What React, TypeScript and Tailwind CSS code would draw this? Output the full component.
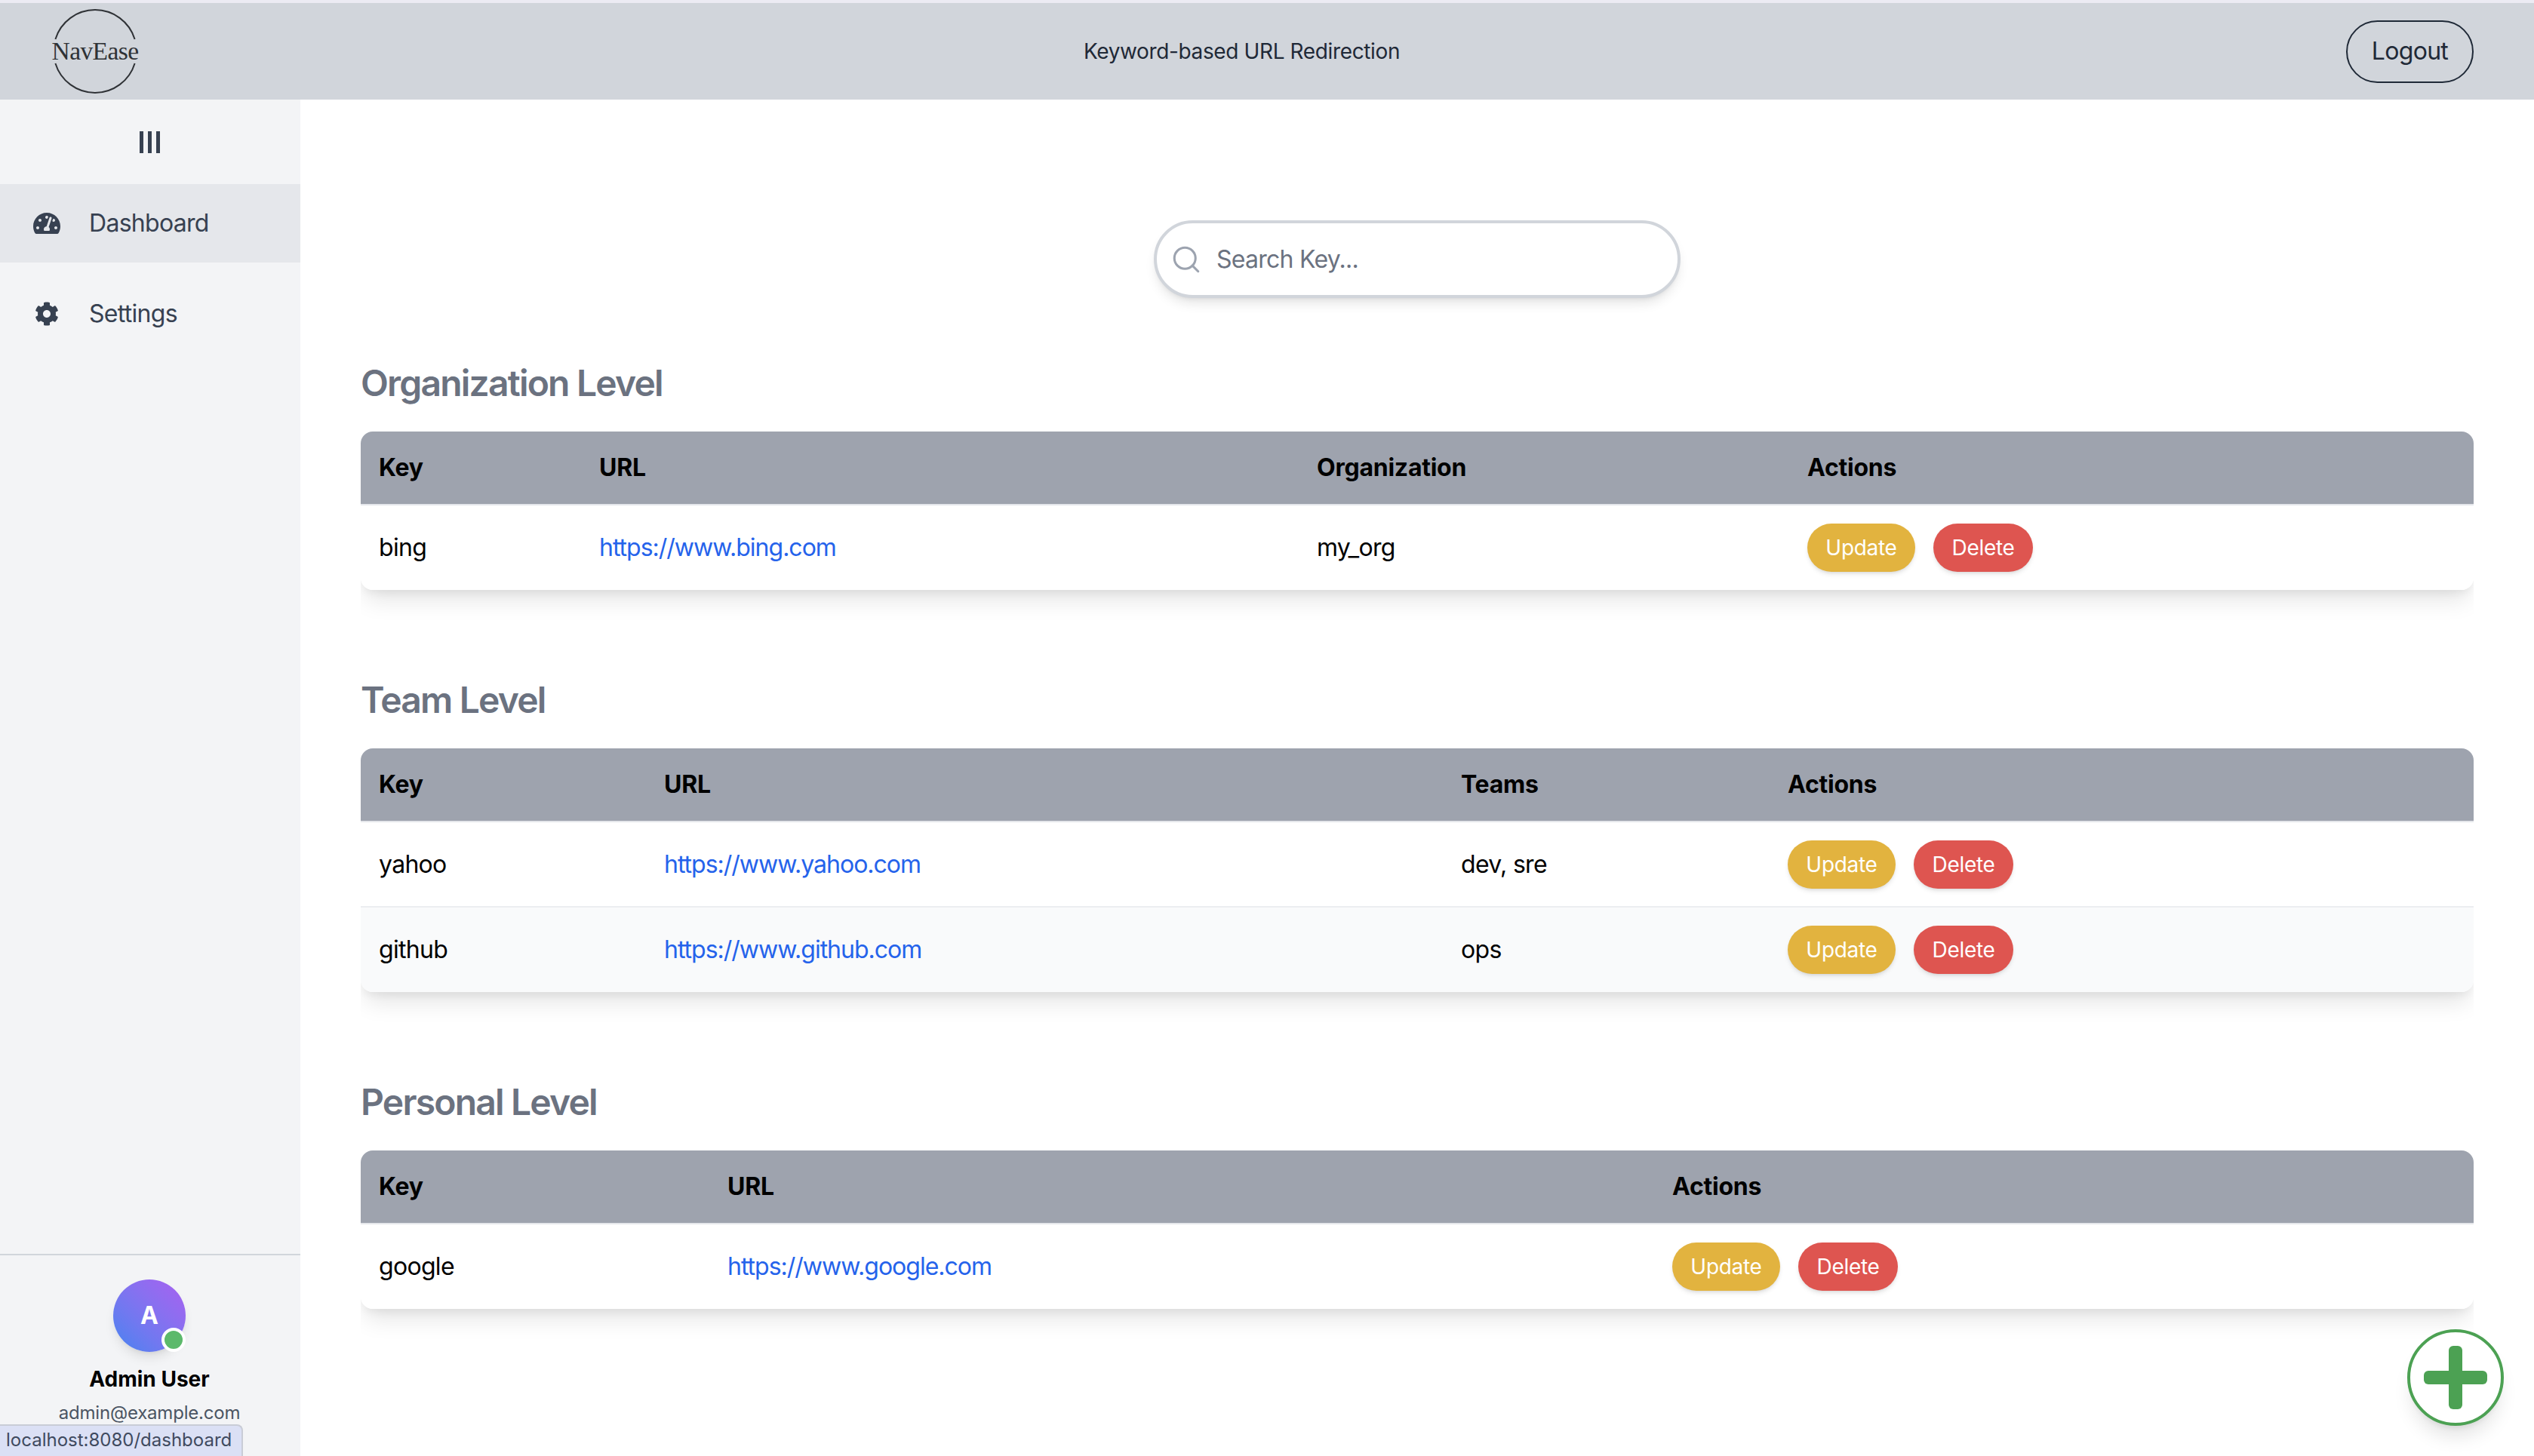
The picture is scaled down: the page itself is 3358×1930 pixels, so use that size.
import { Search } from "lucide-react"
import { FaCog, FaTachometerAlt } from "react-icons/fa"

type Row = { key: string; url: string; extra?: string }

function NavLogo() {
  return (
    <svg width="120" height="120" viewBox="0 0 120 120">
      <path d="M7.4 44 A55 55 0 0 1 112.6 44" fill="none" stroke="#2f3236" strokeWidth="2" />
      <path d="M7.4 76 A55 55 0 0 0 112.6 76" fill="none" stroke="#2f3236" strokeWidth="2" />
      <text x="60" y="71" textAnchor="middle" fontFamily="Liberation Serif, serif" fontSize="33.5" letterSpacing="-0.6" fill="#2f3236">
        NavEase
      </text>
    </svg>
  )
}

function ActionButtons() {
  return (
    <div className="flex gap-[24px]">
      <button className="h-[64px] w-[143px] rounded-full bg-[#e2b33f] text-[28px] tracking-[-0.3px] text-white shadow-md">Update</button>
      <button className="h-[64px] w-[132px] rounded-full bg-[#de5550] text-[28px] tracking-[-0.3px] text-white shadow-md">Delete</button>
    </div>
  )
}

function LevelTable(props: { title: string; extra?: string; widths: string[]; rows: Row[] }) {
  const { title, extra, widths, rows } = props
  const headers = extra ? ["Key", "URL", extra, "Actions"] : ["Key", "URL", "Actions"]
  return (
    <section className="mb-[68px]">
      <h2 className="mb-[32px] h-[64px] text-[48px] leading-[64px] font-semibold tracking-[-1.8px] text-[#6b7280]">{title}</h2>
      <div className="overflow-hidden pb-[46px]">
        <table className="w-full table-fixed border-collapse overflow-hidden rounded-[16px] bg-white shadow-[0_20px_30px_-6px_rgba(0,0,0,0.1),0_8px_12px_-4px_rgba(0,0,0,0.06)]">
          <thead>
            <tr className="border-b-2 border-[#e5e7eb] bg-[#9ea3ae]">
              {headers.map((h, i) => (
                <th key={h} style={{ width: widths[i] }} className="h-[97px] px-[24px] text-left text-[32px] font-bold tracking-[-0.25px] text-black">
                  {h}
                </th>
              ))}
            </tr>
          </thead>
          <tbody className="text-[32px] tracking-[-0.7px]">
            {rows.map((r, i) => {
              const line = i < rows.length - 1 ? " border-b-2 border-[#eceef1]" : ""
              return (
                <tr key={r.key} className={i % 2 === 1 ? "bg-[#f9fafb]" : "bg-white"}>
                  <td className={"h-[113px] px-[24px] text-black" + line}>{r.key}</td>
                  <td className={"px-[24px] tracking-[-1px] text-[#2563eb]" + line}>{r.url}</td>
                  {extra && <td className={"px-[24px] text-black" + line}>{r.extra}</td>}
                  <td className={"px-[24px]" + line}>
                    <ActionButtons />
                  </td>
                </tr>
              )
            })}
          </tbody>
        </table>
      </div>
    </section>
  )
}

export default function App() {
  return (
    <div className="flex h-[1930px] w-[3358px] flex-col overflow-hidden bg-white font-[Inter,sans-serif]">
      <div className="h-[4px] shrink-0 bg-[#ecebf3]" />
      <header className="flex h-[128px] shrink-0 items-center justify-between bg-[#d1d5db] pr-[80px] pl-[66px]">
        <NavLogo />
        <span className="mr-[4px] text-[28px] tracking-[-0.37px] text-[#1f2937]">Keyword-based URL Redirection</span>
        <button className="h-[83px] w-[169px] rounded-full border-2 border-[#1f2937] text-[32px] tracking-[-0.7px] text-[#1f2937]">Logout</button>
      </header>

      <div className="flex min-h-0 flex-1">
        <aside className="flex w-[398px] shrink-0 flex-col bg-[#f3f4f6]">
          <div className="flex h-[112px] items-center justify-center gap-[6px] pr-[2px]">
            <span className="h-[29px] w-[5px] bg-[#374151]" />
            <span className="h-[29px] w-[5px] bg-[#374151]" />
            <span className="h-[29px] w-[5px] bg-[#374151]" />
          </div>
          <nav className="flex flex-col gap-[16px] text-[32px] tracking-[-0.7px] text-[#374151]">
            <a className="flex h-[104px] items-center bg-[#e5e7eb] pl-[44px]">
              <FaTachometerAlt className="h-[32px] w-[36px]" />
              <span className="ml-[38px]">Dashboard</span>
            </a>
            <a className="flex h-[104px] items-center pl-[44px]">
              <FaCog className="h-[32px] w-[36px]" />
              <span className="ml-[38px]">Settings</span>
            </a>
          </nav>
          <div className="mt-auto flex h-[268px] flex-col items-center border-t-2 border-[#d1d5db] pt-[32px] pr-[2px]">
            <div className="relative flex h-[96px] w-[96px] items-center justify-center rounded-full bg-gradient-to-tr from-[#3f83f0] to-[#a85ff0] text-[32px] font-bold text-white shadow-lg">
              A
              <span className="absolute right-0 bottom-0 h-[32px] w-[32px] rounded-full border-4 border-white bg-[#5cb96b]" />
            </div>
            <div className="mt-[15px] text-[28px] font-bold text-black">Admin User</div>
            <div className="mt-[6px] text-[24px] tracking-[-0.2px] text-[#4b5563]">admin@example.com</div>
          </div>
        </aside>

        <main className="min-w-0 flex-1 px-[80px] pt-[160px]">
          <div className="mx-auto flex h-[103px] w-[698px] items-center gap-[19px] rounded-full border-4 border-[#d1d5db] bg-white pl-[18px] shadow-lg">
            <Search className="h-[42px] w-[42px] text-[#9ca3af]" strokeWidth={1.75} />
            <span className="text-[32px] tracking-[-0.75px] text-[#6b7280]">Search Key...</span>
          </div>
          <div className="mt-[81px]">
            <LevelTable
              title="Organization Level"
              extra="Organization"
              widths={["292px", "951px", "650px", "907px"]}
              rows={[{ key: "bing", url: "https://www.bing.com", extra: "my_org" }]}
            />
            <LevelTable
              title="Team Level"
              extra="Teams"
              widths={["378px", "1056px", "433px", "933px"]}
              rows={[
                { key: "yahoo", url: "https://www.yahoo.com", extra: "dev, sre" },
                { key: "github", url: "https://www.github.com", extra: "ops" },
              ]}
            />
            <LevelTable
              title="Personal Level"
              widths={["462px", "1252px", "1086px"]}
              rows={[{ key: "google", url: "https://www.google.com" }]}
            />
          </div>
        </main>
      </div>

      <button className="fixed right-[40px] bottom-[40px] flex h-[128px] w-[128px] items-center justify-center rounded-full border-4 border-[#4ca153] bg-white shadow-xl">
        <svg width="84" height="84" viewBox="0 0 84 84">
          <rect x="33" y="0" width="18" height="84" rx="6" fill="#4ca153" />
          <rect x="0" y="33" width="84" height="18" rx="6" fill="#4ca153" />
        </svg>
      </button>

      <div className="fixed bottom-0 left-0 flex h-[42px] w-[322px] items-center rounded-tr-[8px] border-t-2 border-r-2 border-[#c9ccd6] bg-[#dbe0f5] pb-[2px] pl-[8px] text-[24px] text-[#3f4a5f]">
        localhost:8080/dashboard
      </div>
    </div>
  )
}
